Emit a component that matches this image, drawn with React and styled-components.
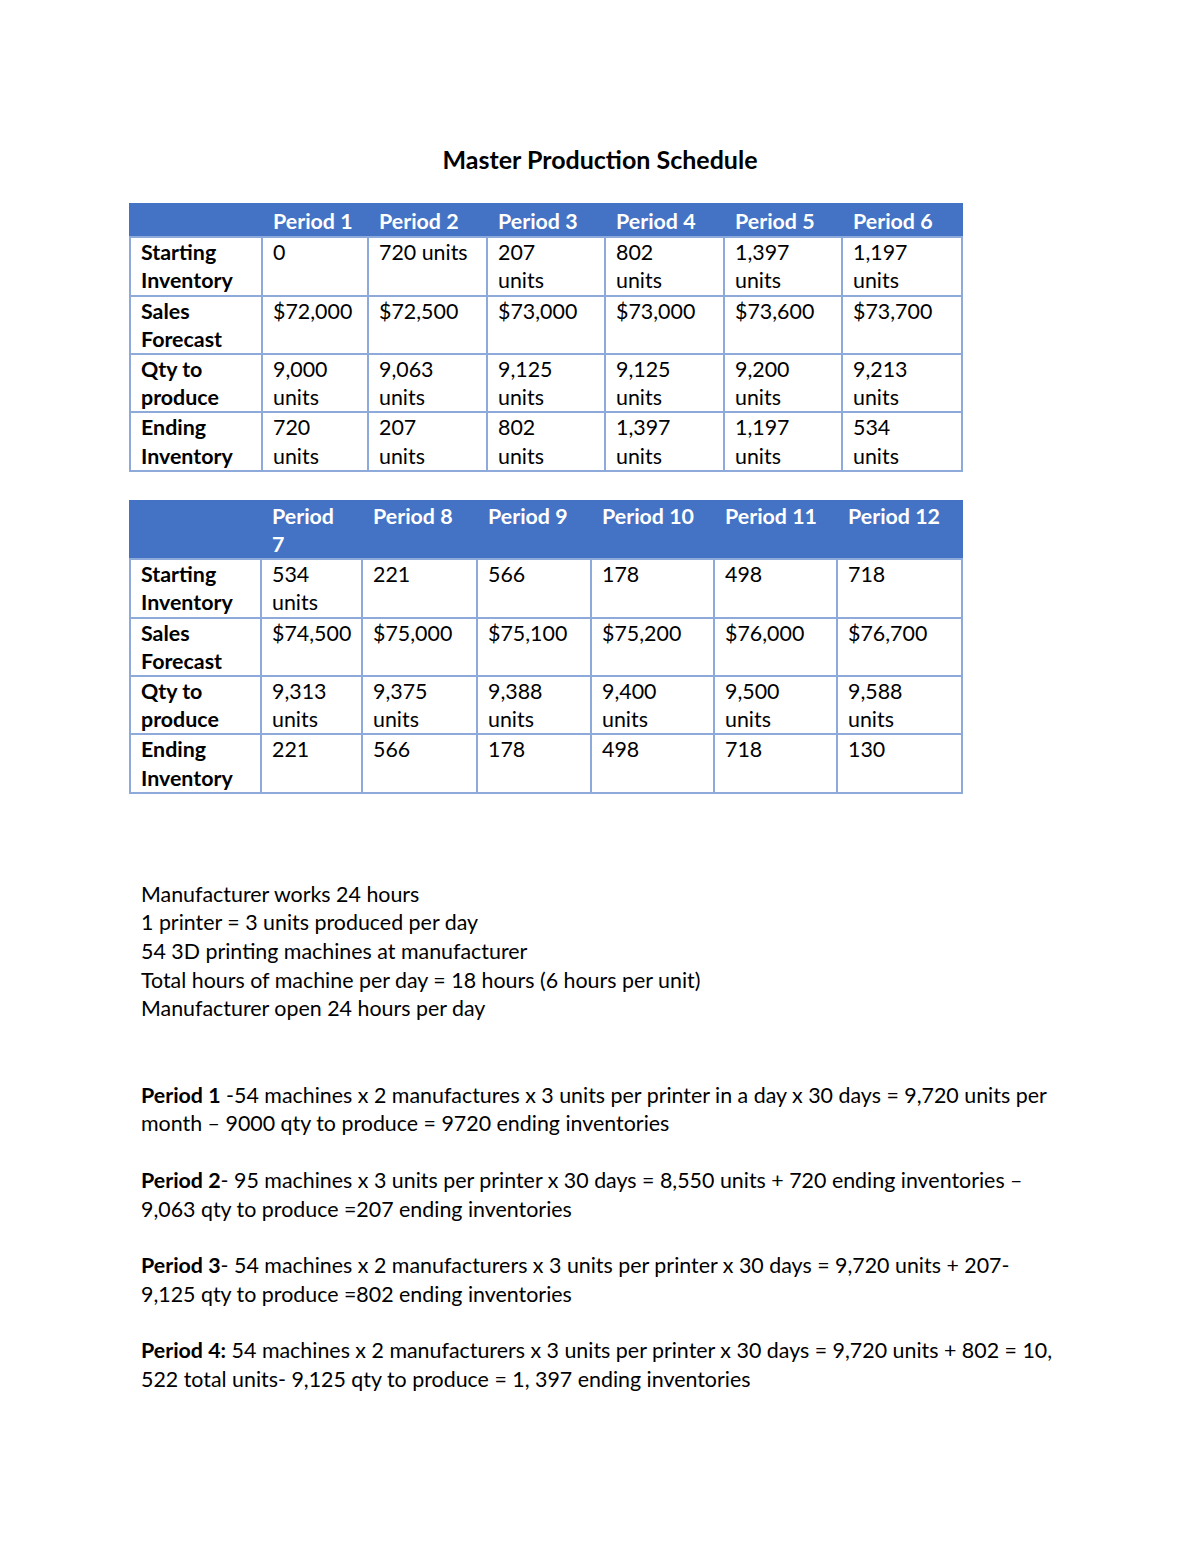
import React from "react";
import styled, { createGlobalStyle } from "styled-components";

const GlobalStyle = createGlobalStyle`
  html, body {
    margin: 0;
    padding: 0;
    background: #ffffff;
  }
  body {
    font-family: "Lato", "Noto Sans", sans-serif;
    color: #000000;
  }
`;

const Page = styled.div`
  width: 1200px;
  height: 1553px;
  box-sizing: border-box;
  padding: 142px 0 0 129px;
  font-size: 21.4px;
`;

const Title = styled.h1`
  width: 942px;
  margin: 0 0 27px 0;
  text-align: center;
  font-size: 25px;
  line-height: 34px;
  font-weight: 700;
`;

const Table = styled.table`
  border-collapse: collapse;
  table-layout: fixed;
  width: ${(p) => p.$width}px;
  margin-bottom: ${(p) => p.$gap || 0}px;
`;

const HeadCell = styled.th`
  background: #4472c4;
  color: #ffffff;
  font-weight: 700;
  text-align: left;
  vertical-align: top;
  padding: ${(p) => (p.$tall ? "0 10px" : "2px 10px 1px")};
  line-height: 28.2px;
  border: 2px solid #4472c4;
  border-bottom-color: #8eaadb;
`;

const Cell = styled.td`
  text-align: left;
  vertical-align: top;
  padding: 0 10px;
  line-height: 28.2px;
  height: 56px;
  border: 2px solid #8eaadb;
  font-weight: ${(p) => (p.$label ? 700 : 400)};
  white-space: nowrap;
`;

const Notes = styled.div`
  margin: 86px 0 0 12px;
  line-height: 28.6px;
`;

const Para = styled.p`
  margin: 0;
  line-height: 28.6px;
  margin-top: ${(p) => p.$top || 0}px;
  white-space: nowrap;
`;

const Strong = styled.b`
  font-weight: 700;
`;

const Lines = ({ lines }) =>
  lines.map((l, i) => (
    <React.Fragment key={i}>
      {i > 0 && <br />}
      {l}
    </React.Fragment>
  ));

const labels = [
  ["Starting", "Inventory"],
  ["Sales", "Forecast"],
  ["Qty to", "produce"],
  ["Ending", "Inventory"],
];

const table1 = {
  widths: [132, 106, 119, 118, 119, 118, 120],
  heads: [["Period 1"], ["Period 2"], ["Period 3"], ["Period 4"], ["Period 5"], ["Period 6"]],
  rows: [
    [["0"], ["720 units"], ["207", "units"], ["802", "units"], ["1,397", "units"], ["1,197", "units"]],
    [["$72,000"], ["$72,500"], ["$73,000"], ["$73,000"], ["$73,600"], ["$73,700"]],
    [["9,000", "units"], ["9,063", "units"], ["9,125", "units"], ["9,125", "units"], ["9,200", "units"], ["9,213", "units"]],
    [["720", "units"], ["207", "units"], ["802", "units"], ["1,397", "units"], ["1,197", "units"], ["534", "units"]],
  ],
};

const table2 = {
  widths: [131, 101, 115, 114, 123, 123, 125],
  heads: [["Period", "7"], ["Period 8"], ["Period 9"], ["Period 10"], ["Period 11"], ["Period 12"]],
  rows: [
    [["534", "units"], ["221"], ["566"], ["178"], ["498"], ["718"]],
    [["$74,500"], ["$75,000"], ["$75,100"], ["$75,200"], ["$76,000"], ["$76,700"]],
    [["9,313", "units"], ["9,375", "units"], ["9,388", "units"], ["9,400", "units"], ["9,500", "units"], ["9,588", "units"]],
    [["221"], ["566"], ["178"], ["498"], ["718"], ["130"]],
  ],
};

const Schedule = ({ data, tall, gap }) => {
  const width = data.widths.reduce((a, b) => a + b, 0);
  return (
    <Table $width={width} $gap={gap}>
      <colgroup>
        {data.widths.map((w, i) => (
          <col key={i} style={{ width: w }} />
        ))}
      </colgroup>
      <thead>
        <tr>
          <HeadCell $tall={tall} />
          {data.heads.map((h, i) => (
            <HeadCell key={i} $tall={tall}>
              <Lines lines={h} />
            </HeadCell>
          ))}
        </tr>
      </thead>
      <tbody>
        {data.rows.map((row, r) => (
          <tr key={r}>
            <Cell $label>
              <Lines lines={labels[r]} />
            </Cell>
            {row.map((c, i) => (
              <Cell key={i}>
                <Lines lines={c} />
              </Cell>
            ))}
          </tr>
        ))}
      </tbody>
    </Table>
  );
};

export default function App() {
  return (
    <>
      <GlobalStyle />
      <Page>
        <Title>Master Production Schedule</Title>
        <Schedule data={table1} gap={28} />
        <Schedule data={table2} tall />
        <Notes>
          <Para>Manufacturer works 24 hours</Para>
          <Para>1 printer = 3 units produced per day</Para>
          <Para>54 3D printing machines at manufacturer</Para>
          <Para>Total hours of machine per day = 18 hours (6 hours per unit)</Para>
          <Para>Manufacturer open 24 hours per day</Para>

          <Para $top={58}>
            <Strong>Period 1</Strong> -54 machines x 2 manufactures x 3 units per printer in a day x 30 days = 9,720 units per
            <br />
            month – 9000 qty to produce = 9720 ending inventories
          </Para>
          <Para $top={28}>
            <Strong>Period 2</Strong>- 95 machines x 3 units per printer x 30 days = 8,550 units + 720 ending inventories –
            <br />
            9,063 qty to produce =207 ending inventories
          </Para>
          <Para $top={28}>
            <Strong>Period 3</Strong>- 54 machines x 2 manufacturers x 3 units per printer x 30 days = 9,720 units + 207-
            <br />
            9,125 qty to produce =802 ending inventories
          </Para>
          <Para $top={28}>
            <Strong>Period 4:</Strong> 54 machines x 2 manufacturers x 3 units per printer x 30 days = 9,720 units + 802 = 10,
            <br />
            522 total units- 9,125 qty to produce = 1, 397 ending inventories
          </Para>
        </Notes>
      </Page>
    </>
  );
}
